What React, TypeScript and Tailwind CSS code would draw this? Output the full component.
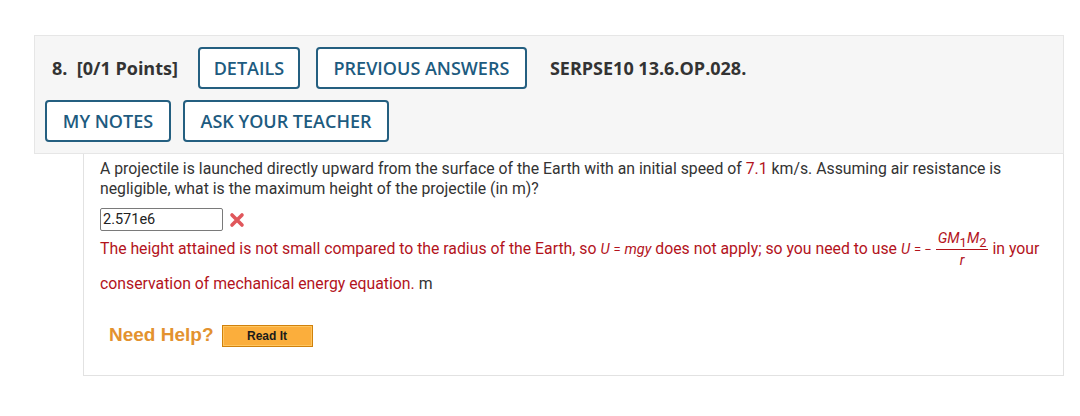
import React from "react";

const navBtn =
  "h-[42px] px-0 flex items-center justify-center whitespace-nowrap border-2 border-[#245f80] rounded-[4px] bg-white text-[#1d5b80] text-[18px] font-semibold leading-none";

function Fraction() {
  return (
    <span className="inline-flex flex-col items-center align-middle mx-[4px] text-[14.5px] leading-[13px]">
      <span className="italic px-[2px]">
        GM<sub className="not-italic text-[13px]">1</sub>M<sub className="not-italic text-[13px]">2</sub>
      </span>
      <span className="block w-full h-px bg-[#b3131c] my-[4px]" />
      <span className="italic">r</span>
    </span>
  );
}

export default function App() {
  return (
    <div className="min-h-screen bg-white pt-[35px] pl-[34px]">
      <div className="w-[1030px] bg-[#f6f6f6] border border-[#e6e6e6] px-[10px] pt-[11px] pb-[11px] flex flex-col gap-[11px] font-['Open_Sans',sans-serif]">
        <div className="flex items-center">
          <span className="ml-[7px] mr-[20px] text-[18px] font-bold text-[#333] whitespace-nowrap">
            8.&nbsp;&nbsp;[0/1 Points]
          </span>
          <button className={`${navBtn} w-[102px]`}>DETAILS</button>
          <button className={`${navBtn} ml-[16px] w-[211px]`}>PREVIOUS ANSWERS</button>
          <span className="ml-[23px] text-[18px] font-bold text-[#333] whitespace-nowrap">SERPSE10 13.6.OP.028.</span>
        </div>
        <div className="flex items-center">
          <button className={`${navBtn} w-[126px]`}>MY NOTES</button>
          <button className={`${navBtn} ml-[12px] w-[206px]`}>ASK YOUR TEACHER</button>
        </div>
      </div>

      <div className="ml-[49px] w-[981px] h-[222px] border border-t-0 border-[#e2e2e2] pl-[16px] pt-[5px] font-['Roboto',sans-serif] text-[15.8px] text-[#333]">
        <p className="leading-[20px]">
          A projectile is launched directly upward from the surface of the Earth with an initial speed of{" "}
          <span className="text-[#b3131c]">7.1</span> km/s. Assuming air resistance is
          <br />
          negligible, what is the maximum height of the projectile (in m)?
        </p>

        <div className="flex items-center mt-[9px]">
          <div className="w-[123px] h-[23px] border border-[#7a7a7a] rounded-[2px] px-[2px] text-[14.5px] leading-[21px] text-[#222]">
            2.571e6
          </div>
          <svg width="16" height="16" viewBox="0 0 16 16" className="ml-[6px]">
            <path d="M3 3 L13 13 M13 3 L3 13" stroke="#e0575b" strokeWidth="3.6" strokeLinecap="round" />
          </svg>
        </div>

        <p className="text-[#b3131c] leading-[34px] mt-[1px]">
          The height attained is not small compared to the radius of the Earth, so{" "}
          <span className="italic text-[14.5px]">U</span> <span className="text-[13px]">=</span>{" "}
          <span className="italic text-[14.5px]">mgy</span> does not apply; so you need to use{" "}
          <span className="italic text-[14.5px]">U</span> <span className="text-[13px]">= −</span>
          <Fraction />in your
          <br />
          conservation of mechanical energy equation. <span className="text-[#333]">m</span>
        </p>

        <div className="flex items-center mt-[20px] ml-[9px] font-['Liberation_Sans',Arial,sans-serif]">
          <span className="text-[19px] font-bold text-[#e3922f]">Need Help?</span>
          <button className="ml-[8px] w-[91px] h-[22px] bg-[#fbae3c] border border-[#d0810c] shadow-[inset_0_0_0_1px_#ffc660] text-[12px] font-bold text-[#1a1a1a] leading-none">
            Read It
          </button>
        </div>
      </div>
    </div>
  );
}
